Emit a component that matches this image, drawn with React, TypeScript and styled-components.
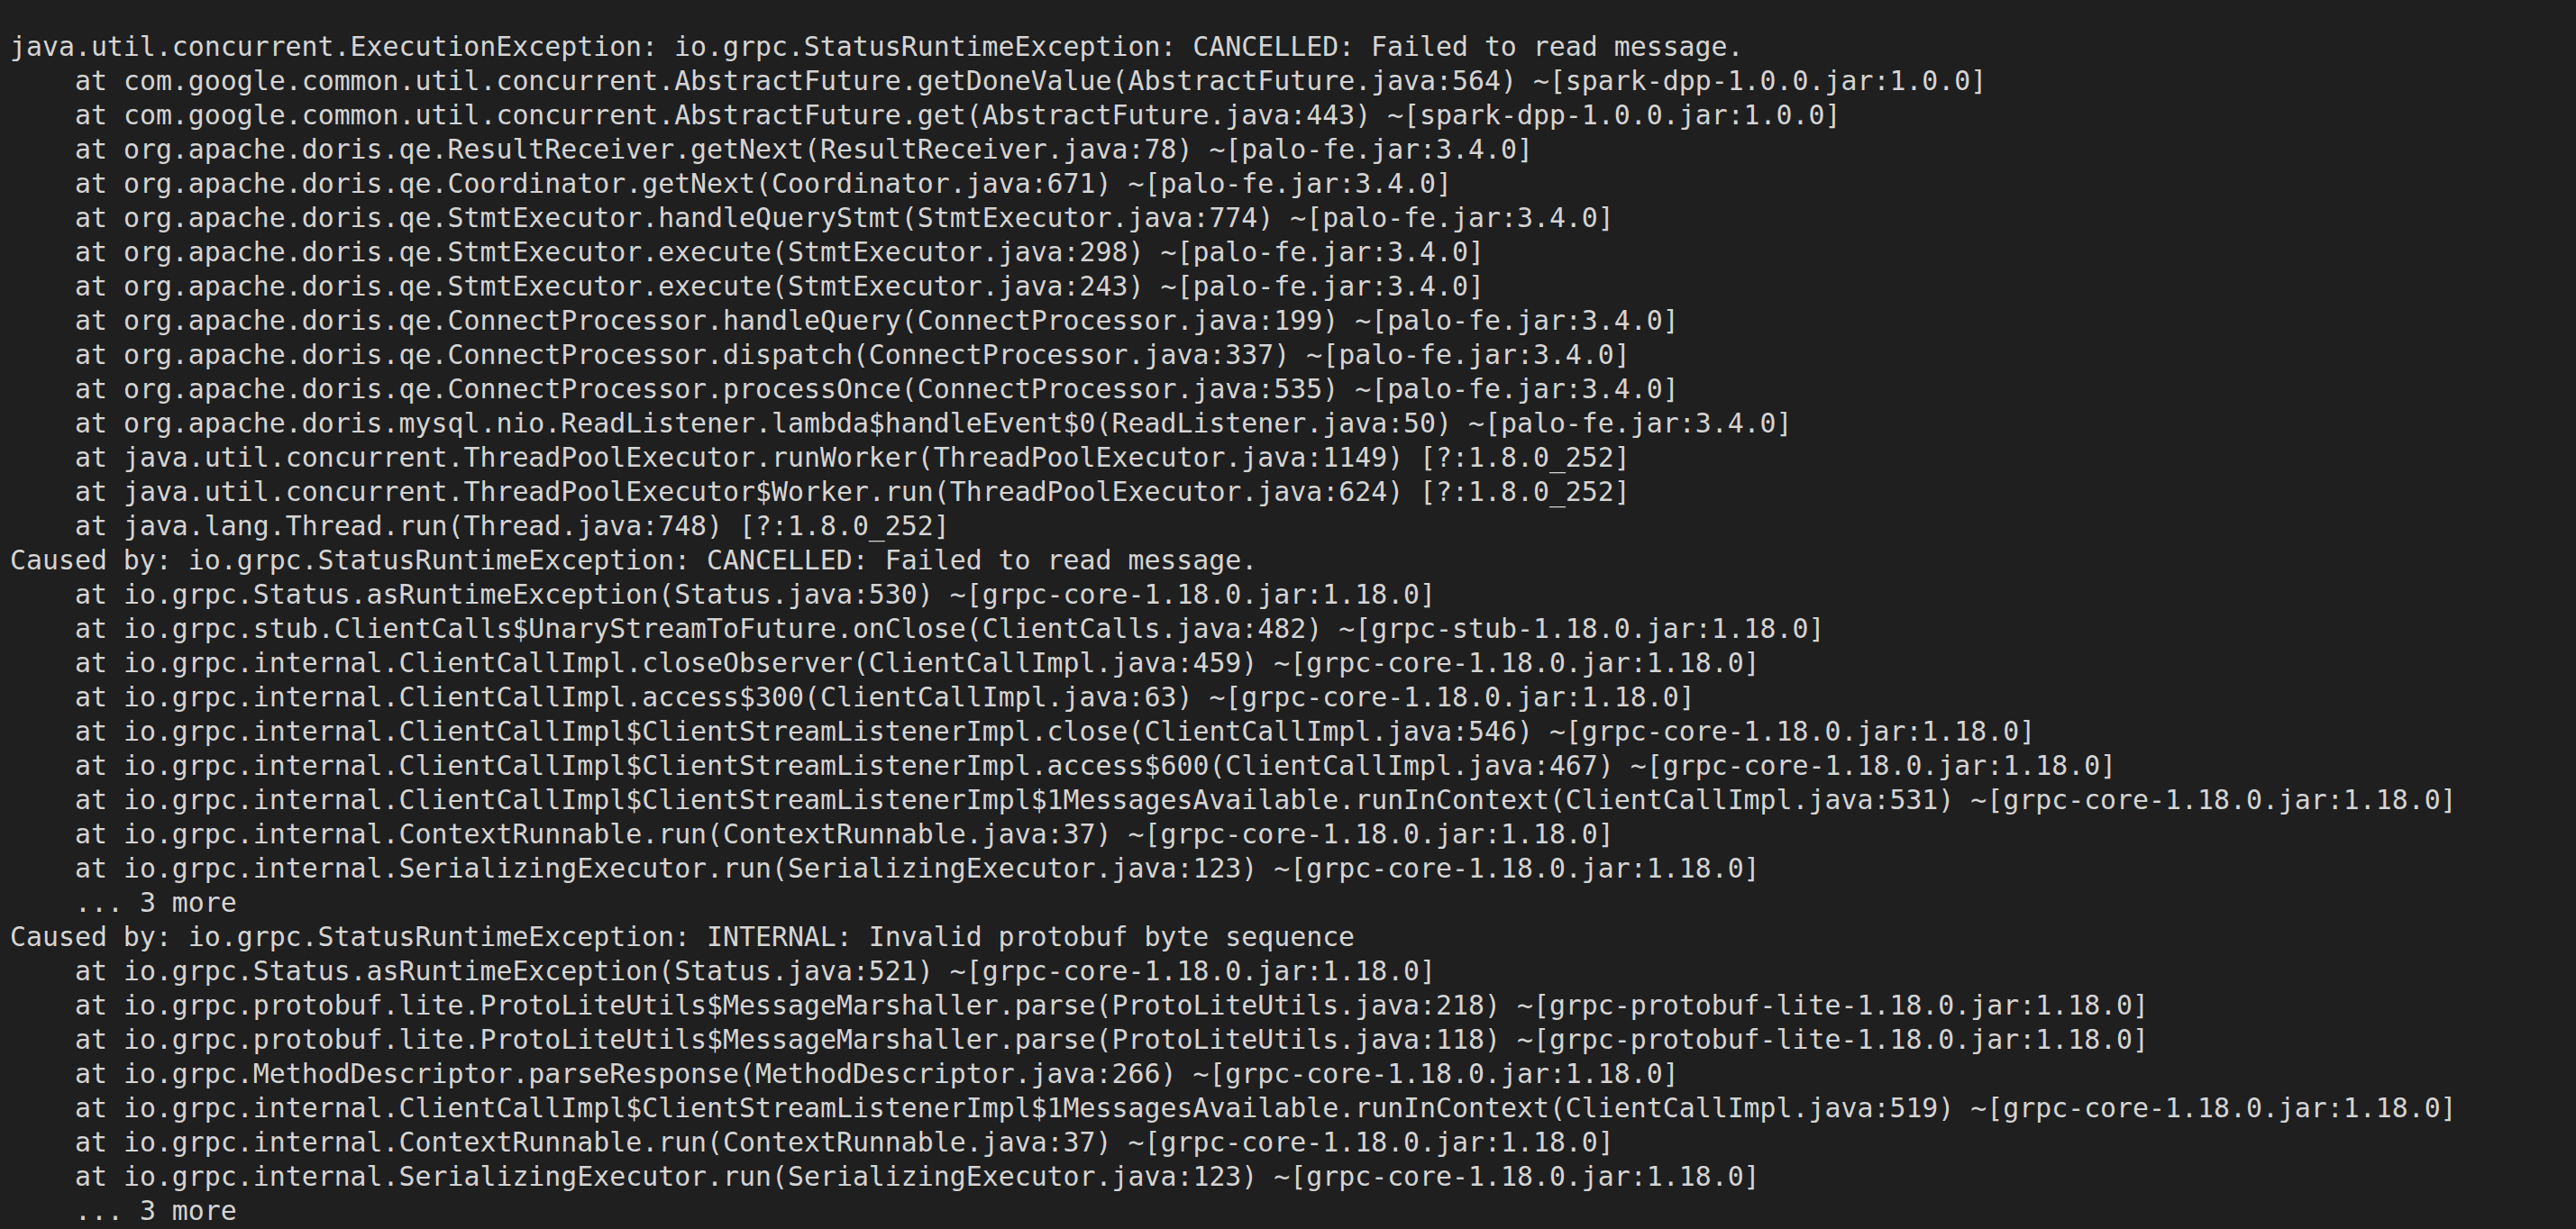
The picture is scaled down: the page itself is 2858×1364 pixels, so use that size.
import React from "react";
import styled, { createGlobalStyle } from "styled-components";

const Global = createGlobalStyle`
  html, body {
    margin: 0;
    padding: 0;
    background: #1f1f1f;
  }
`;

const Terminal = styled.div`
  box-sizing: border-box;
  width: 2858px;
  height: 1364px;
  overflow: hidden;
  background: #1f1f1f;
  padding: 33px 0 0 11px;
`;

const Output = styled.pre`
  margin: 0;
  font-family: "DejaVu Sans Mono", "Liberation Mono", monospace;
  font-size: 29.87px;
  line-height: 38px;
  color: #d4d4d4;
  white-space: pre;
`;

const Line = styled.div<{ $indent?: boolean }>`
  height: 38px;
  padding-left: ${(p) => (p.$indent ? "72px" : "0")};
`;

const lines: string[] = [
  "java.util.concurrent.ExecutionException: io.grpc.StatusRuntimeException: CANCELLED: Failed to read message.",
  "\tat com.google.common.util.concurrent.AbstractFuture.getDoneValue(AbstractFuture.java:564) ~[spark-dpp-1.0.0.jar:1.0.0]",
  "\tat com.google.common.util.concurrent.AbstractFuture.get(AbstractFuture.java:443) ~[spark-dpp-1.0.0.jar:1.0.0]",
  "\tat org.apache.doris.qe.ResultReceiver.getNext(ResultReceiver.java:78) ~[palo-fe.jar:3.4.0]",
  "\tat org.apache.doris.qe.Coordinator.getNext(Coordinator.java:671) ~[palo-fe.jar:3.4.0]",
  "\tat org.apache.doris.qe.StmtExecutor.handleQueryStmt(StmtExecutor.java:774) ~[palo-fe.jar:3.4.0]",
  "\tat org.apache.doris.qe.StmtExecutor.execute(StmtExecutor.java:298) ~[palo-fe.jar:3.4.0]",
  "\tat org.apache.doris.qe.StmtExecutor.execute(StmtExecutor.java:243) ~[palo-fe.jar:3.4.0]",
  "\tat org.apache.doris.qe.ConnectProcessor.handleQuery(ConnectProcessor.java:199) ~[palo-fe.jar:3.4.0]",
  "\tat org.apache.doris.qe.ConnectProcessor.dispatch(ConnectProcessor.java:337) ~[palo-fe.jar:3.4.0]",
  "\tat org.apache.doris.qe.ConnectProcessor.processOnce(ConnectProcessor.java:535) ~[palo-fe.jar:3.4.0]",
  "\tat org.apache.doris.mysql.nio.ReadListener.lambda$handleEvent$0(ReadListener.java:50) ~[palo-fe.jar:3.4.0]",
  "\tat java.util.concurrent.ThreadPoolExecutor.runWorker(ThreadPoolExecutor.java:1149) [?:1.8.0_252]",
  "\tat java.util.concurrent.ThreadPoolExecutor$Worker.run(ThreadPoolExecutor.java:624) [?:1.8.0_252]",
  "\tat java.lang.Thread.run(Thread.java:748) [?:1.8.0_252]",
  "Caused by: io.grpc.StatusRuntimeException: CANCELLED: Failed to read message.",
  "\tat io.grpc.Status.asRuntimeException(Status.java:530) ~[grpc-core-1.18.0.jar:1.18.0]",
  "\tat io.grpc.stub.ClientCalls$UnaryStreamToFuture.onClose(ClientCalls.java:482) ~[grpc-stub-1.18.0.jar:1.18.0]",
  "\tat io.grpc.internal.ClientCallImpl.closeObserver(ClientCallImpl.java:459) ~[grpc-core-1.18.0.jar:1.18.0]",
  "\tat io.grpc.internal.ClientCallImpl.access$300(ClientCallImpl.java:63) ~[grpc-core-1.18.0.jar:1.18.0]",
  "\tat io.grpc.internal.ClientCallImpl$ClientStreamListenerImpl.close(ClientCallImpl.java:546) ~[grpc-core-1.18.0.jar:1.18.0]",
  "\tat io.grpc.internal.ClientCallImpl$ClientStreamListenerImpl.access$600(ClientCallImpl.java:467) ~[grpc-core-1.18.0.jar:1.18.0]",
  "\tat io.grpc.internal.ClientCallImpl$ClientStreamListenerImpl$1MessagesAvailable.runInContext(ClientCallImpl.java:531) ~[grpc-core-1.18.0.jar:1.18.0]",
  "\tat io.grpc.internal.ContextRunnable.run(ContextRunnable.java:37) ~[grpc-core-1.18.0.jar:1.18.0]",
  "\tat io.grpc.internal.SerializingExecutor.run(SerializingExecutor.java:123) ~[grpc-core-1.18.0.jar:1.18.0]",
  "\t... 3 more",
  "Caused by: io.grpc.StatusRuntimeException: INTERNAL: Invalid protobuf byte sequence",
  "\tat io.grpc.Status.asRuntimeException(Status.java:521) ~[grpc-core-1.18.0.jar:1.18.0]",
  "\tat io.grpc.protobuf.lite.ProtoLiteUtils$MessageMarshaller.parse(ProtoLiteUtils.java:218) ~[grpc-protobuf-lite-1.18.0.jar:1.18.0]",
  "\tat io.grpc.protobuf.lite.ProtoLiteUtils$MessageMarshaller.parse(ProtoLiteUtils.java:118) ~[grpc-protobuf-lite-1.18.0.jar:1.18.0]",
  "\tat io.grpc.MethodDescriptor.parseResponse(MethodDescriptor.java:266) ~[grpc-core-1.18.0.jar:1.18.0]",
  "\tat io.grpc.internal.ClientCallImpl$ClientStreamListenerImpl$1MessagesAvailable.runInContext(ClientCallImpl.java:519) ~[grpc-core-1.18.0.jar:1.18.0]",
  "\tat io.grpc.internal.ContextRunnable.run(ContextRunnable.java:37) ~[grpc-core-1.18.0.jar:1.18.0]",
  "\tat io.grpc.internal.SerializingExecutor.run(SerializingExecutor.java:123) ~[grpc-core-1.18.0.jar:1.18.0]",
  "\t... 3 more",
];

export default function App() {
  return (
    <>
      <Global />
      <Terminal>
        <Output>
          {lines.map((l, i) => {
            const indent = l.startsWith("\t");
            return (
              <Line key={i} $indent={indent}>
                {indent ? l.slice(1) : l}
              </Line>
            );
          })}
        </Output>
      </Terminal>
    </>
  );
}
